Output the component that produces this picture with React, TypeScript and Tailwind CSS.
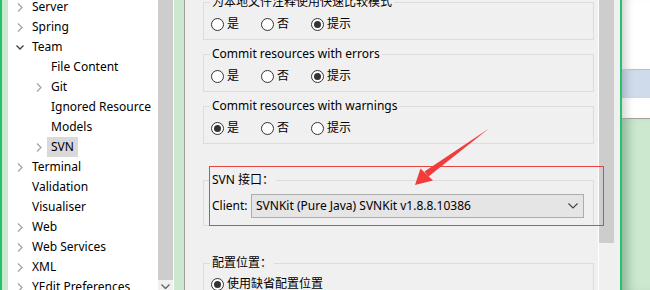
import React from 'react';

type Node = { label: string; level: 0 | 1; state?: 'open' | 'closed'; selected?: boolean };

const tree: Node[] = [
  { label: 'Server', level: 0, state: 'closed' },
  { label: 'Spring', level: 0, state: 'closed' },
  { label: 'Team', level: 0, state: 'open' },
  { label: 'File Content', level: 1 },
  { label: 'Git', level: 1, state: 'closed' },
  { label: 'Ignored Resource', level: 1 },
  { label: 'Models', level: 1 },
  { label: 'SVN', level: 1, state: 'closed', selected: true },
  { label: 'Terminal', level: 0, state: 'closed' },
  { label: 'Validation', level: 0 },
  { label: 'Visualiser', level: 0 },
  { label: 'Web', level: 0, state: 'closed' },
  { label: 'Web Services', level: 0, state: 'closed' },
  { label: 'XML', level: 0, state: 'closed' },
  { label: 'YEdit Preferences', level: 0, state: 'closed' },
];

const Chevron: React.FC<{ state?: 'open' | 'closed' }> = ({ state }) => {
  if (state === 'open')
    return (
      <svg width="8" height="5" viewBox="0 0 8 5">
        <path d="M0.5 0.5 L4 4 L7.5 0.5" fill="none" stroke="#404040" strokeWidth="1.3" />
      </svg>
    );
  if (state === 'closed')
    return (
      <svg width="6" height="9" viewBox="0 0 6 9">
        <path d="M1 0.5 L5 4.5 L1 8.5" fill="none" stroke="#a6a6a6" strokeWidth="1.3" />
      </svg>
    );
  return null;
};

const Radio: React.FC<{ label: string; checked?: boolean; wide?: boolean }> = ({ label, checked, wide }) => (
  <div className={wide ? 'flex items-center' : 'flex w-[50px] items-center'}>
    <span className="flex h-[13px] w-[13px] shrink-0 items-center justify-center rounded-full border border-[#333333] bg-white">
      {checked && <span className="h-[7px] w-[7px] rounded-full bg-[#333333]" />}
    </span>
    <span className="ml-[3px] leading-[16px]">{label}</span>
  </div>
);

const Group: React.FC<{ title: string; className: string; children: React.ReactNode }> = ({ title, className, children }) => (
  <fieldset className={`w-[391px] shrink-0 border border-[#dcdcdc] ${className}`}>
    <legend className="ml-[6px] px-[2px] leading-[16px]">{title}</legend>
    {children}
  </fieldset>
);

const YesNo: React.FC<{ pick: number }> = ({ pick }) => (
  <div className="mt-[6px] flex h-[16px] pl-[7px]">
    <Radio label="是" checked={pick === 0} />
    <Radio label="否" checked={pick === 1} />
    <Radio label="提示" checked={pick === 2} />
  </div>
);

export default function App() {
  return (
    <div className="relative flex h-[290px] w-[650px] overflow-hidden bg-[#f0f0f0] font-['Noto_Sans','Noto_Sans_CJK_SC',sans-serif] text-[12px] text-black">
      {/* left window edge */}
      <div className="w-[2px] shrink-0 bg-[#22c36a]" />
      <div className="w-[6px] shrink-0 bg-[#cce8cf]" />

      {/* preference tree */}
      <div className="w-[150px] shrink-0 bg-white">
        <div className="-mt-[3px] flex flex-col">
          {tree.map((n) => (
            <div key={n.label} className={n.level === 0 ? 'flex h-[20px] items-center pl-[6px]' : 'flex h-[20px] items-center pl-[25px]'}>
              <span className="flex w-[12px] justify-center">
                <Chevron state={n.state} />
              </span>
              <span className={n.selected ? 'ml-[2px] flex h-[20px] items-center whitespace-nowrap bg-[#d9d9d9] px-[4px]' : 'ml-[2px] whitespace-nowrap px-[4px]'}>
                {n.label}
              </span>
            </div>
          ))}
        </div>
      </div>
      <div className="flex w-[15px] shrink-0 flex-col">
        <div className="h-[280px] bg-[#cdcdcd]" />
        <div className="flex flex-1 items-end justify-center bg-[#f0f0f0] pb-[1px]">
          <svg width="9" height="5" viewBox="0 0 9 5">
            <path d="M0.5 0.5 L4.5 4.5 L8.5 0.5" fill="none" stroke="#606060" strokeWidth="1.3" />
          </svg>
        </div>
      </div>
      <div className="w-[1px] shrink-0 bg-white" />
      <div className="w-[10px] shrink-0 bg-[#cce8cf]" />
      <div className="w-[1px] shrink-0 bg-[#a0a0a0]" />

      {/* SVN preference page */}
      <div className="flex w-[413px] shrink-0 flex-col pl-[18px]">
        <Group title="为本地文件注释使用快速比较模式" className="-mt-[6px] pb-[7px]">
          <YesNo pick={2} />
        </Group>
        <Group title="Commit resources with errors" className="mt-[6px] pb-[7px]">
          <YesNo pick={2} />
        </Group>
        <Group title="Commit resources with warnings" className="mt-[6px] pb-[7px]">
          <YesNo pick={0} />
        </Group>
        <Group title="SVN 接口：" className="mt-[28px] pb-[7px]">
          <div className="mt-[6px] flex items-center pl-[8px]">
            <span className="w-[39px] leading-[16px]">Client:</span>
            <div className="flex h-[24px] w-[333px] items-center justify-between border border-[#adadad] bg-[#e5e5e5] pl-[4px] pr-[5px]">
              <span className="whitespace-nowrap">SVNKit (Pure Java) SVNKit v1.8.8.10386</span>
              <svg width="10" height="6" viewBox="0 0 10 6">
                <path d="M0.5 0.5 L5 5 L9.5 0.5" fill="none" stroke="#404040" strokeWidth="1.1" />
              </svg>
            </div>
          </div>
        </Group>
        <Group title="配置位置：" className="mt-[29px] pb-[7px]">
          <div className="mt-[5px] flex h-[16px] pl-[7px]">
            <Radio label="使用缺省配置位置" checked wide />
          </div>
        </Group>
      </div>
      <div className="w-[1px] shrink-0 bg-white" />
      <div className="flex w-[15px] shrink-0 flex-col">
        <div className="h-[243px] bg-[#cdcdcd]" />
      </div>
      <div className="w-[6px] shrink-0" />
      <div className="w-[2px] shrink-0 bg-[#22c36a]" />

      {/* window behind */}
      <div className="flex flex-1 flex-col">
        <div className="h-[69px] bg-white shadow-[inset_10px_0_8px_-6px_rgba(0,0,0,0.18)]" />
        <div className="h-[29px] border-t border-[#b4bfd0] bg-[#cfdbeb] shadow-[inset_10px_0_8px_-6px_rgba(0,0,0,0.18)]" />
        <div className="h-[20px] bg-white shadow-[inset_10px_0_8px_-6px_rgba(0,0,0,0.18)]" />
        <div className="flex-1 border-t border-[#a0a0a0] bg-[#cce8cf] shadow-[inset_12px_0_10px_-6px_rgba(0,60,20,0.28)]" />
      </div>

      {/* annotation */}
      <div className="absolute left-[209px] top-[166px] h-[60px] w-[395px] border border-[#e84343]" />
      <svg className="absolute left-0 top-0" width="650" height="290" viewBox="0 0 650 290">
        <polygon points="489,128.5 424.5,171.5 428.5,176.5" fill="#f23b3b" />
        <polygon points="415,185 420.5,168.5 433,180.5" fill="#f23b3b" />
      </svg>
    </div>
  );
}
